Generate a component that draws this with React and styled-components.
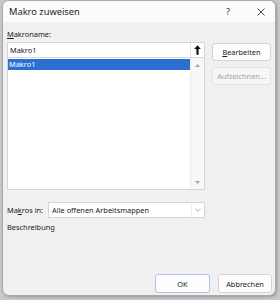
import React from 'react';
import styled, { createGlobalStyle } from 'styled-components';

const Global = createGlobalStyle`
  html, body { margin: 0; padding: 0; background: #c9c9c9; }
  body { font-family: "Noto Sans", "DejaVu Sans", sans-serif; }
  #root { width: 280px; height: 300px; }
`;

const Window = styled.div`
  box-sizing: border-box;
  width: 274px;
  height: 296px;
  margin-left: 2px;
  border: 1px solid #a9a9a9;
  border-radius: 7px;
  background: #f0f0f0;
  overflow: hidden;
  display: flex;
  flex-direction: column;
  color: #1b1b1b;
  box-shadow: 1px 1px 3px rgba(0, 0, 0, 0.25);
`;

const TitleBar = styled.div`
  flex: none;
  height: 21px;
  background: #fbfbfb;
  display: flex;
  align-items: center;
  padding-left: 6px;
  font-size: 9.3px;
`;

const Title = styled.div`
  flex: 1;
`;

const Control = styled.div`
  width: 28px;
  height: 21px;
  display: flex;
  align-items: center;
  justify-content: center;
  margin-right: ${(p) => p.$mr || 0}px;
  font-size: 9px;
  color: #333;
`;

const Body = styled.div`
  flex: 1;
  display: flex;
  flex-direction: column;
  padding: 0 3px 0 4px;
  font-size: 7.4px;
`;

const Top = styled.div`
  display: grid;
  grid-template-columns: 198px 59px;
  column-gap: 7px;
`;

const LeftCol = styled.div`
  display: flex;
  flex-direction: column;
`;

const Label = styled.div`
  height: 10px;
  line-height: 10px;
  margin-top: ${(p) => p.$mt || 0}px;
  margin-bottom: ${(p) => p.$mb || 0}px;
  white-space: nowrap;
`;

const Input = styled.div`
  box-sizing: border-box;
  height: 16px;
  background: #fff;
  border: 1px solid #d6d6d6;
  display: flex;
  align-items: center;
  padding-left: 2px;
`;

const InputText = styled.div`
  flex: 1;
`;

const ArrowButton = styled.div`
  width: 13px;
  height: 14px;
  display: flex;
  align-items: center;
  justify-content: center;
  border-left: 1px solid #e4e4e4;
`;

const List = styled.div`
  box-sizing: border-box;
  height: 133px;
  margin-top: -1px;
  background: #fff;
  border: 1px solid #d6d6d6;
  display: flex;
`;

const Items = styled.div`
  flex: 1;
  padding-top: 1px;
`;

const Item = styled.div`
  height: 11px;
  line-height: 11px;
  padding-left: 1px;
  background: ${(p) => (p.$selected ? '#2c6fd3' : 'transparent')};
  color: ${(p) => (p.$selected ? '#fff' : '#1b1b1b')};
`;

const Scrollbar = styled.div`
  width: 13px;
  background: #f7f7f7;
  border-left: 1px solid #ececec;
  display: flex;
  flex-direction: column;
  justify-content: space-between;
  align-items: center;
  padding: 6px 0 5px;
`;

const RightCol = styled.div`
  display: flex;
  flex-direction: column;
  gap: 6px;
  padding-top: 21px;
`;

const Button = styled.div`
  box-sizing: border-box;
  height: ${(p) => p.$h || 18}px;
  width: ${(p) => (p.$w ? `${p.$w}px` : 'auto')};
  background: ${(p) => (p.$disabled ? '#f6f6f6' : '#fdfdfd')};
  border: 1px solid ${(p) => (p.$default ? '#a9c4e8' : p.$disabled ? '#e3e3e3' : '#d4d4d4')};
  border-radius: 3px;
  display: flex;
  align-items: center;
  justify-content: center;
  color: ${(p) => (p.$disabled ? '#a2a2a2' : '#1b1b1b')};
  white-space: nowrap;
`;

const SelectRow = styled.div`
  display: flex;
  align-items: center;
  margin-top: 12px;
  height: 16px;
  width: 198px;
`;

const SelectLabel = styled.div`
  width: 41px;
  white-space: nowrap;
`;

const Select = styled.div`
  box-sizing: border-box;
  flex: 1;
  height: 16px;
  background: #fff;
  border: 1px solid #d6d6d6;
  display: flex;
  align-items: center;
  padding-left: 3px;
`;

const SelectText = styled.div`
  flex: 1;
  white-space: nowrap;
`;

const Chevron = styled.div`
  width: 12px;
  height: 14px;
  border-left: 1px solid #ececec;
  display: flex;
  align-items: center;
  justify-content: center;
`;

const Spacer = styled.div`
  flex: 1;
`;

const Footer = styled.div`
  display: flex;
  justify-content: flex-end;
  gap: 8px;
  padding-bottom: 2px;
`;

const U = styled.span`
  text-decoration: underline;
  text-underline-offset: 1px;
`;

const Tri = ({ up }) => (
  <svg width="5" height="3" viewBox="0 0 5 3">
    <path d={up ? 'M2.5 0 L5 3 L0 3 Z' : 'M0 0 L5 0 L2.5 3 Z'} fill="#a6a6a6" />
  </svg>
);

export default function App() {
  return (
    <>
      <Global />
      <Window>
        <TitleBar>
          <Title>Makro zuweisen</Title>
          <Control $mr={5}>?</Control>
          <Control>
            <svg width="8" height="8" viewBox="0 0 8 8">
              <path d="M0.5 0.5 L7.5 7.5 M7.5 0.5 L0.5 7.5" stroke="#333" strokeWidth="0.9" />
            </svg>
          </Control>
        </TitleBar>
        <Body>
          <Top>
            <LeftCol>
              <Label $mt={7} $mb={3}>
                <U>M</U>akroname:
              </Label>
              <Input>
                <InputText>Makro1</InputText>
                <ArrowButton>
                  <svg width="7" height="10" viewBox="0 0 7 10">
                    <path d="M3.5 0.3 L6.8 4 L4.6 4 L4.6 9.8 L2.4 9.8 L2.4 4 L0.2 4 Z" fill="#111" />
                  </svg>
                </ArrowButton>
              </Input>
              <List>
                <Items>
                  <Item $selected>Makro1</Item>
                </Items>
                <Scrollbar>
                  <Tri up />
                  <Tri />
                </Scrollbar>
              </List>
            </LeftCol>
            <RightCol>
              <Button>
                <span>
                  <U>B</U>earbeiten
                </span>
              </Button>
              <Button $disabled>Aufzeichnen...</Button>
            </RightCol>
          </Top>
          <SelectRow>
            <SelectLabel>
              Ma<U>k</U>ros in:
            </SelectLabel>
            <Select>
              <SelectText>Alle offenen Arbeitsmappen</SelectText>
              <Chevron>
                <svg width="6" height="4" viewBox="0 0 6 4">
                  <path d="M0.5 0.8 L3 3.2 L5.5 0.8" fill="none" stroke="#9a9a9a" strokeWidth="0.8" />
                </svg>
              </Chevron>
            </Select>
          </SelectRow>
          <Label $mt={4}>Beschreibung</Label>
          <Spacer />
          <Footer>
            <Button $default $w={55} $h={19}>OK</Button>
            <Button $w={54} $h={19}>Abbrechen</Button>
          </Footer>
        </Body>
      </Window>
    </>
  );
}
